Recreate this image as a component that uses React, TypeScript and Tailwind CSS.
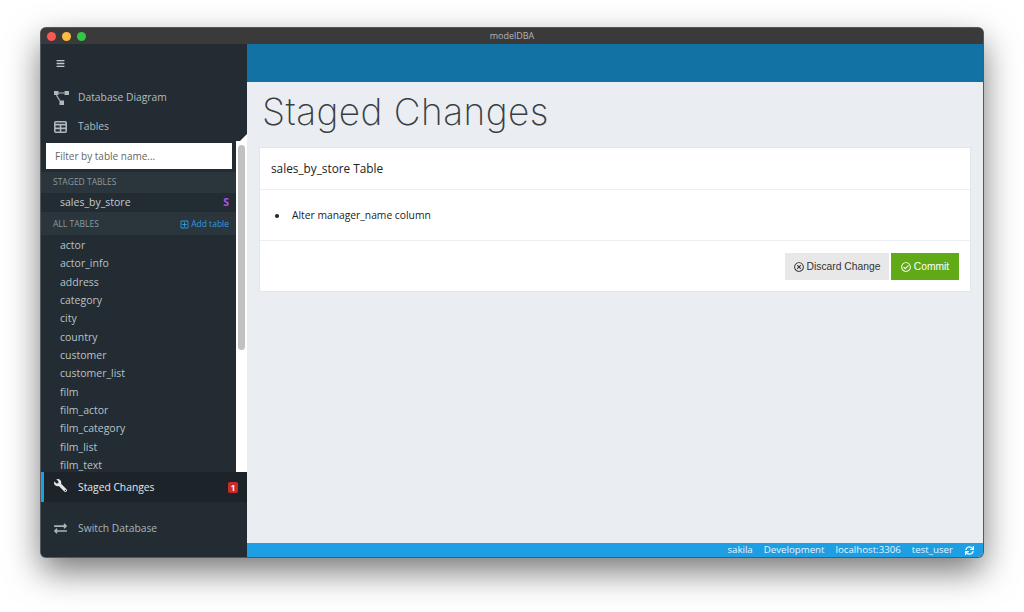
import React from "react";
import { FaBars, FaExchangeAlt, FaRegCheckCircle, FaRegPlusSquare, FaRegTimesCircle, FaSync, FaWrench } from "react-icons/fa";

const tables = [
  "actor",
  "actor_info",
  "address",
  "category",
  "city",
  "country",
  "customer",
  "customer_list",
  "film",
  "film_actor",
  "film_category",
  "film_list",
  "film_text",
];

const DiagramIcon = () => (
  <svg width="15" height="14" viewBox="0 0 15 14" fill="currentColor">
    <rect x="0" y="0" width="4.5" height="4" />
    <rect x="10.5" y="0" width="4.5" height="4" />
    <rect x="5.5" y="9.5" width="4.5" height="4.5" />
    <path d="M4.5 1.4h6v1.2h-6zM3 4l3.4 5.5-1 .6L1.9 4.6z" />
  </svg>
);

const TableIcon = () => (
  <svg width="13" height="12" viewBox="0 0 13 12" fill="none" stroke="currentColor" strokeWidth="1.6">
    <rect x="0.8" y="0.8" width="11.4" height="10.4" rx="1" />
    <path d="M1 3.6h11M1 7.4h11M6.5 3.6v7.6" />
  </svg>
);

const Sidebar = () => (
  <div className="w-[206px] shrink-0 flex flex-col bg-[#222c32] text-[#a9b4ba] relative">
    <div className="h-[38px] shrink-0 pl-[15px] flex items-center">
      <FaBars size={9} className="text-[#c3cacd]" />
    </div>
    <div className="h-[30px] shrink-0 pl-[13px] pt-[1px] flex items-center gap-[9px] text-[#b3bcc1] text-[10.3px]">
      <div className="w-[15px] flex text-[#aeb8bd]"><DiagramIcon /></div>
      <span>Database Diagram</span>
    </div>
    <div className="h-[29px] shrink-0 pl-[13px] flex items-center gap-[9px] text-[#b3bcc1] text-[10.3px]">
      <div className="w-[15px] flex text-[#aeb8bd]"><TableIcon /></div>
      <span>Tables</span>
    </div>

    <div className="h-[331px] shrink-0 flex overflow-hidden">
      <div className="w-[195px] flex flex-col overflow-hidden">
        <div className="shrink-0 pt-[2px] pl-[5px] pr-[4px]">
          <input
            placeholder="Filter by table name..."
            readOnly
            className="block w-[186px] h-[26px] bg-white px-[9px] text-[10px] text-[#333] placeholder:text-[#666] outline-none"
          />
        </div>
        <div className="h-[21px] shrink-0 mt-[3px] pl-[12px] flex items-center bg-[#2a353c] text-[8.5px] text-[#8d999f]">STAGED TABLES</div>
        <div className="h-[19px] shrink-0 pl-[19px] pr-[7px] pt-[1px] flex items-center justify-between text-[10.5px] text-[#c3cbcf]">
          <span>sales_by_store</span>
          <span className="font-bold text-[#b44fe8]">S</span>
        </div>
        <div className="h-[23px] shrink-0 pl-[12px] pr-[7px] pt-[1px] flex items-center justify-between bg-[#2a353c] text-[8.5px] text-[#8d999f]">
          <span>ALL TABLES</span>
          <span className="flex items-center gap-[2px] text-[#2f9be0]">
            <FaRegPlusSquare size={9} />
            Add table
          </span>
        </div>
        <div className="shrink-0 pt-[1px] pl-[19px] flex flex-col text-[10.5px] text-[#b9c2c6]">
          {tables.map((t) => (
            <div key={t} className="h-[18.33px] shrink-0 leading-[18.33px]">{t}</div>
          ))}
        </div>
      </div>
      <div className="w-[11px] bg-white flex justify-center pt-[4px]">
        <div className="w-[7px] h-[205px] rounded bg-[#c1c1c1]"></div>
      </div>
    </div>
    <div className="absolute top-[90px] right-0 w-0 h-0 border-l-[7px] border-b-[7px] border-l-transparent border-b-white"></div>

    <div className="h-[30px] shrink-0 flex items-center bg-[#1c2429] border-l-[3px] border-[#1e9fe3] pl-[10px] pt-[1px] text-[10.3px] text-[#e3e7e9] gap-[9px]">
      <div className="w-[15px] flex text-[#e3e7e9]"><FaWrench size={13} className="-scale-x-100 -translate-y-[2px]" /></div>
      <span>Staged Changes</span>
      <span className="ml-auto mr-[9px] w-[10px] h-[11px] rounded-[2px] bg-[#cc2a2a] text-white text-[8px] font-bold flex items-center justify-center">1</span>
    </div>
    <div className="flex-1 pl-[13px] pb-[3px] pt-[1px] flex items-center gap-[9px] text-[#a9b4ba] text-[10.3px]">
      <div className="w-[15px] flex"><FaExchangeAlt size={13} /></div>
      <span>Switch Database</span>
    </div>
  </div>
);

const Card = () => (
  <div className="mx-[12px] bg-white border border-[#e2e6ea] text-[#333]">
    <div className="h-[42px] pl-[11px] flex items-center text-[11.8px] text-[#222] border-b border-[#eceff2]">sales_by_store Table</div>
    <div className="h-[51px] pl-[15px] pt-[1px] flex items-center gap-[13px] text-[10.3px] text-[#222] border-b border-[#eceff2]">
      <span className="w-[4px] h-[4px] rounded-full bg-[#222]"></span>
      <span>Alter manager_name column</span>
    </div>
    <div className="h-[50px] pr-[11px] flex items-center justify-end gap-[2px] text-[10.3px] font-['Liberation_Sans',sans-serif]">
      <button className="h-[27px] w-[104px] pt-[1px] bg-[#e8e8e8] flex items-center justify-center gap-[3px] text-[#333]">
        <FaRegTimesCircle size={10} />
        Discard Change
      </button>
      <button className="h-[27px] w-[68px] pt-[1px] bg-[#60a917] flex items-center justify-center gap-[3px] text-white">
        <FaRegCheckCircle size={10} />
        Commit
      </button>
    </div>
  </div>
);

export default function App() {
  return (
    <div className="w-[1024px] h-[612px] bg-white overflow-hidden pt-[28px] pl-[41px] font-['Open_Sans',sans-serif]">
      <div className="w-[942px] h-[529px] rounded-[5px] overflow-hidden flex flex-col bg-[#222c32] shadow-[0_14px_34px_rgba(0,0,0,0.55)] ring-1 ring-[#55595b]">
        <div className="h-[16px] shrink-0 relative flex items-center justify-center bg-[#3a3a3a] text-[9px] text-[#b5b5b5]">
          <div className="absolute left-[6px] top-[4px] flex gap-[6px]">
            <span className="w-[9px] h-[9px] rounded-full bg-[#fc5753]"></span>
            <span className="w-[9px] h-[9px] rounded-full bg-[#fdbc40]"></span>
            <span className="w-[9px] h-[9px] rounded-full bg-[#33c748]"></span>
          </div>
          modelDBA
        </div>
        <div className="flex-1 flex min-h-0">
          <Sidebar />
          <div className="flex-1 flex flex-col bg-[#eaeef3] min-w-0">
            <div className="h-[38px] shrink-0 bg-[#1272a3]"></div>
            <h1 className="h-[65px] shrink-0 pl-[15px] pb-[5px] flex items-center font-['Inter',sans-serif] font-extralight text-[37px] text-[#3a3f44] tracking-[0.45px]">Staged Changes</h1>
            <Card />
            <div className="flex-1"></div>
            <div className="h-[14px] shrink-0 bg-[#1e9fe3] pr-[9px] flex items-center justify-end gap-[11px] text-[9.7px] font-medium text-[#e6f4fc]">
              <span>sakila</span>
              <span>Development</span>
              <span>localhost:3306</span>
              <span>test_user</span>
              <FaSync size={9} className="text-white ml-[1px]" />
            </div>
          </div>
        </div>
      </div>
    </div>
  );
}
